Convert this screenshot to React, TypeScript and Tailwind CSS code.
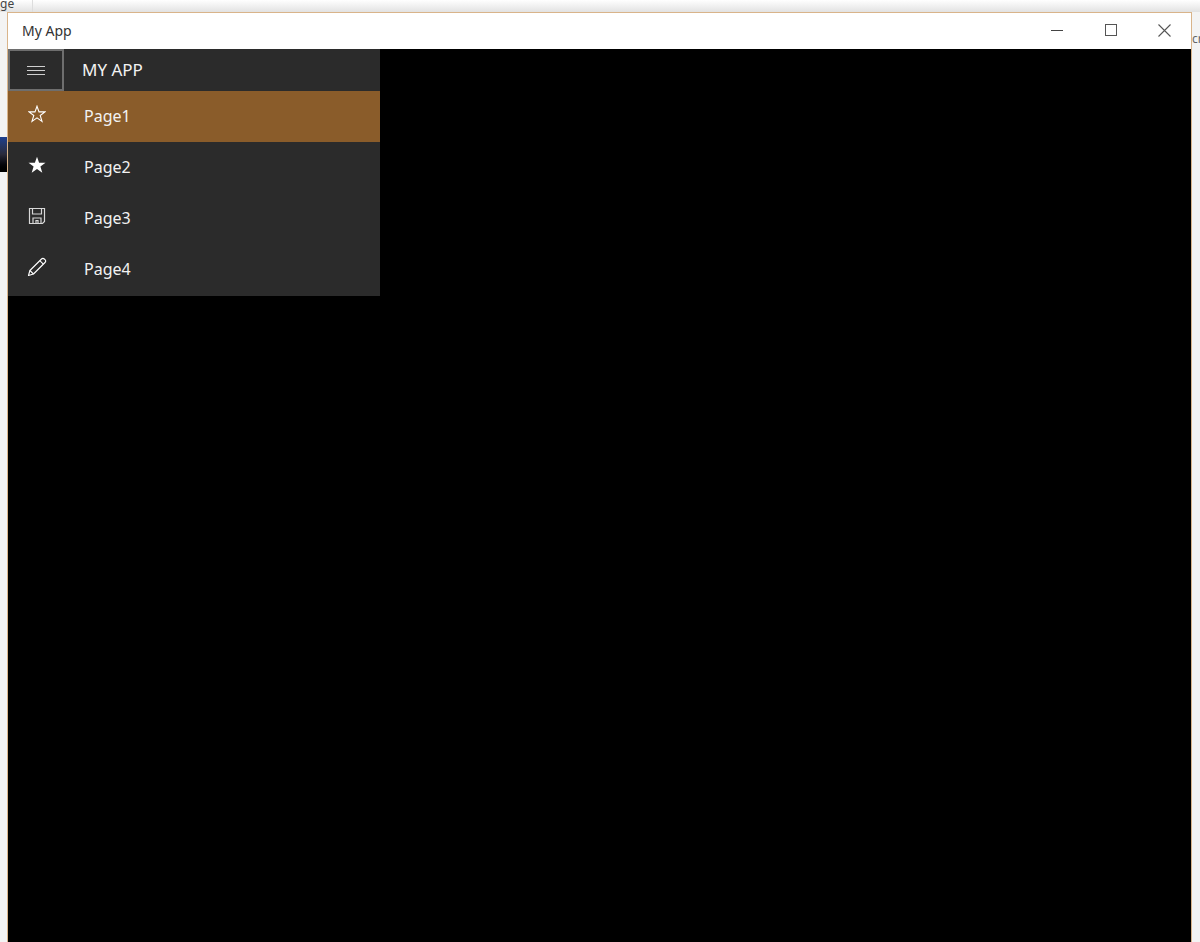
const font = "font-['Noto_Sans','Open_Sans',sans-serif]";

const pages = [
  { name: "Page1", icon: <StarOutline />, active: true },
  { name: "Page2", icon: <StarFilled /> },
  { name: "Page3", icon: <SaveIcon /> },
  { name: "Page4", icon: <PenIcon /> },
];

function StarOutline() {
  return (
    <svg width="18" height="18" viewBox="0 0 18 18" fill="none" stroke="#fff" strokeWidth="1.1">
      <path d="M9 1.200l2 5.700h6l-4.800 3.600 1.800 5.900L9 12.900l-5 3.500 1.800-5.900L1 6.900h6z" />
    </svg>
  );
}

function StarFilled() {
  return (
    <svg width="18" height="18" viewBox="0 0 18 18" fill="#fff">
      <path d="M9 .8l2.100 6h6.400l-5.100 3.800 1.900 6.200L9 13.100l-5.300 3.700 1.900-6.200L.5 6.800h6.400z" />
    </svg>
  );
}

function SaveIcon() {
  return (
    <svg width="18" height="18" viewBox="0 0 18 18" fill="none" stroke="#d8d8d8" strokeWidth="1.2">
      <path d="M1.500 1.500h15v13l-2 2h-13z" />
      <path d="M4.500 1.500v5.500h9v-5.500" />
      <path d="M5 16.500v-5.500h8v5.500" />
      <path d="M8 13.500h2v3h-2z" />
    </svg>
  );
}

function PenIcon() {
  return (
    <svg width="20" height="20" viewBox="0 0 20 20" fill="none" stroke="#fff" strokeWidth="1.1">
      <path d="M1.500 18.500l1.400-5L14.500 2c.8-.8 2-.8 2.800 0l.7.7c.8.8.8 2 0 2.800L6.500 17z" strokeLinejoin="round" />
      <path d="M12.800 3.700l3.500 3.500" />
      <path d="M2.900 13.500l3.600 3.500" />
    </svg>
  );
}

export default function App() {
  return (
    <div className={`${font} flex h-[942px] w-[1200px] flex-col overflow-hidden bg-[#f3f3f3]`}>
      {/* desktop behind the window */}
      <div className="flex h-3 shrink-0 bg-gradient-to-b from-white to-[#e2e2e2]">
        <div className="h-3 w-[33px] overflow-hidden border-r border-[#dddddd] text-[12px] leading-[8px] text-[#444]">
          ge
        </div>
      </div>

      <div className="flex min-h-0 flex-1">
        <div className="w-[7px] shrink-0 pt-[125px]">
          <div className="h-[35px] bg-gradient-to-b from-[#1c3f8f] via-[#2a2a3a] to-black" />
        </div>

        {/* app window */}
        <div className="flex min-w-0 flex-1 flex-col border-x border-t border-[#d9b48a] bg-black">
          <div className="flex h-9 shrink-0 items-center justify-between bg-white pb-0.5">
            <span className="pl-[14px] text-[14px] text-[#333]">My App</span>
            <div className="flex items-center pr-px">
              <div className="flex w-[54px] justify-center">
                <div className="h-px w-[12px] bg-[#444]" />
              </div>
              <div className="flex w-[54px] justify-center">
                <div className="h-[12px] w-[12px] border border-[#555]" />
              </div>
              <div className="flex w-[52px] justify-center">
                <svg width="13" height="13" viewBox="0 0 13 13" stroke="#555" strokeWidth="1.100">
                  <path d="M.5.500l12 12M12.500.500l-12 12" />
                </svg>
              </div>
            </div>
          </div>

          <div className="w-[372px] bg-[#2b2b2b] pb-px text-white">
            <div className="flex h-[42px] items-center">
              <div className="flex h-[42px] w-[56px] items-center justify-center border-2 border-[#6e6e6e]">
                <div className="flex w-[18px] flex-col gap-[3px]">
                  <div className="h-px bg-[#d0d0d0]" />
                  <div className="h-px bg-[#d0d0d0]" />
                  <div className="h-px bg-[#d0d0d0]" />
                </div>
              </div>
              <span className="pl-[18px] text-[17px] text-[#f2f2f2]">MY APP</span>
            </div>
            {pages.map((p) => (
              <div
                key={p.name}
                className={`flex h-[51px] items-center ${p.active ? "bg-[#8a5c2a]" : ""}`}
              >
                <div className="flex w-[58px] -translate-y-[3px] justify-center">{p.icon}</div>
                <span className="pb-0.5 pl-[18px] text-[16px] text-[#f2f2f2]">{p.name}</span>
              </div>
            ))}
          </div>
        </div>

        <div className="w-2 shrink-0 pt-[18px] text-[12px] text-[#666]">cr</div>
      </div>
    </div>
  );
}
